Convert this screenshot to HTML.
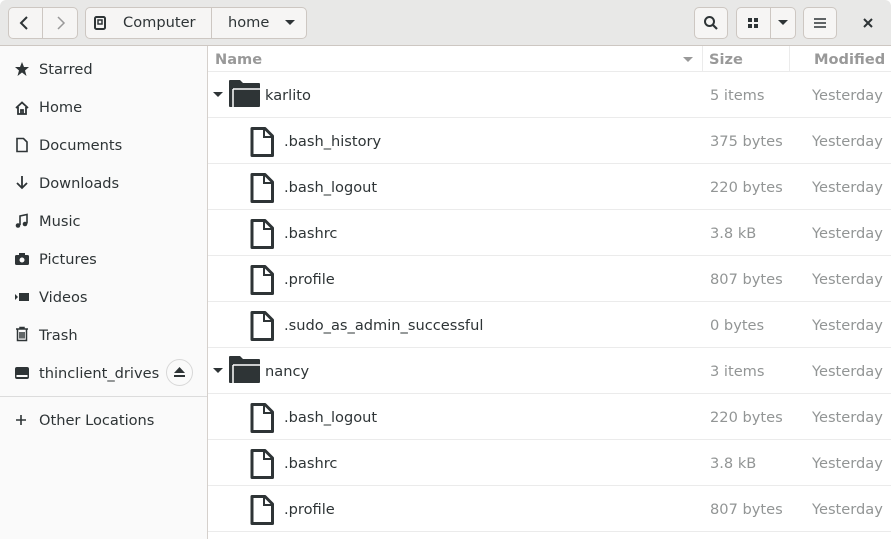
<!DOCTYPE html>
<html><head><meta charset="utf-8"><style>
*{margin:0;padding:0;box-sizing:border-box}
body{width:891px;height:539px;overflow:hidden;background:#fff;font-family:"DejaVu Sans","Liberation Sans",sans-serif;font-size:14.6px;color:#2e3436;position:relative}
.hb{position:absolute;left:0;top:0;width:891px;height:46px;background:#e8e8e7;border-bottom:1px solid #cdc7c2;border-radius:6px 6px 0 0}
.btn{position:absolute;top:7px;height:32px;background:#f6f5f4;border:1px solid #cdc7c2;border-radius:5px}
.side{position:absolute;left:0;top:46px;width:208px;height:493px;background:#fafafa;border-right:1px solid #d5d0cc}
.si{position:absolute;left:39px;height:20px;line-height:20px}
.ic{position:absolute;left:14px}
.a{position:absolute;white-space:nowrap}
.row{position:absolute;left:208px;width:683px;height:46px;border-bottom:1px solid #ebebeb}
.g{color:#929595}
</style></head><body>
<div class="hb"></div>
<div class="btn" style="left:8px;width:70px"></div>
<div style="position:absolute;left:42px;top:8px;width:1px;height:30px;background:#cdc7c2"></div>
<svg class="a" style="left:18px;top:15px" width="14" height="16"><path d="M9 2L3 8L9 14" stroke="#2e3436" stroke-width="2" fill="none"/></svg>
<svg class="a" style="left:54px;top:15px" width="14" height="16"><path d="M4 2L10 8L4 14" stroke="#999" stroke-width="1.5" fill="none"/></svg>
<div class="btn" style="left:85px;width:222px"></div>
<div style="position:absolute;left:211px;top:8px;width:1px;height:30px;background:#cdc7c2"></div>
<svg class="a" style="left:94px;top:16px" width="12" height="14"><rect x="1" y="1" width="10" height="12" rx="1.5" stroke="#2e3436" stroke-width="2" fill="none"/><rect x="4" y="4" width="4" height="4" stroke="#2e3436" stroke-width="1.5" fill="none"/></svg>
<div class="a" style="left:123px;top:14px;color:#2e3436">Computer</div>
<div class="a" style="left:228px;top:14px">home</div>
<svg class="a" style="left:285px;top:20px" width="10" height="6"><path d="M0 0H10L5 5Z" fill="#2e3436"/></svg>
<div class="btn" style="left:694px;width:34px"></div>
<svg class="a" style="left:703px;top:15px" width="16" height="16"><circle cx="6.5" cy="6.5" r="4.5" stroke="#2e3436" stroke-width="2" fill="none"/><path d="M10 10L14 14" stroke="#2e3436" stroke-width="2.2"/></svg>
<div class="btn" style="left:736px;width:60px"></div>
<div style="position:absolute;left:770px;top:8px;width:1px;height:30px;background:#cdc7c2"></div>
<svg class="a" style="left:748px;top:18px" width="10" height="10"><rect x="0" y="0" width="4" height="4" fill="#2e3436"/><rect x="6" y="0" width="4" height="4" fill="#2e3436"/><rect x="0" y="6" width="4" height="4" fill="#2e3436"/><rect x="6" y="6" width="4" height="4" fill="#2e3436"/></svg>
<svg class="a" style="left:778px;top:20px" width="10" height="6"><path d="M0 0H10L5 5Z" fill="#2e3436"/></svg>
<div class="btn" style="left:803px;width:34px"></div>
<svg class="a" style="left:814px;top:17px" width="12" height="12"><path d="M0 2H12M0 6H12M0 10H12" stroke="#2e3436" stroke-width="1.6"/></svg>
<svg class="a" style="left:863px;top:18px" width="10" height="10"><path d="M1 1L9 9M9 1L1 9" stroke="#2e3436" stroke-width="2"/></svg>

<div class="side"></div>
<svg class="ic" style="top:61px" width="16" height="16" viewBox="0 0 16 16"><path d="M8 1L10 6H15L11 9.5L12.5 15L8 11.5L3.5 15L5 9.5L1 6H6Z" fill="#2e3436"/></svg>
<div class="si" style="top:60px">Starred</div>
<svg class="ic" style="top:100px" width="16" height="16"><path d="M2 8L8 2.5L14 8M4 7V14H12V7M7 14V10H9V14" stroke="#2e3436" stroke-width="1.8" fill="none"/></svg>
<div class="si" style="top:98px">Home</div>
<svg class="ic" style="top:137px" width="16" height="16"><path d="M3 1.5H9.5L13 5V14.5H3Z" stroke="#2e3436" stroke-width="1.6" fill="none"/></svg>
<div class="si" style="top:136px">Documents</div>
<svg class="ic" style="top:175px" width="16" height="16"><path d="M8 1V13M3 8L8 13L13 8" stroke="#2e3436" stroke-width="1.8" fill="none"/></svg>
<div class="si" style="top:174px">Downloads</div>
<svg class="ic" style="top:213px" width="16" height="16"><path d="M6 12V3L13 1.5V10.5" stroke="#2e3436" stroke-width="1.6" fill="none"/><circle cx="4" cy="12.5" r="2.3" fill="#2e3436"/><circle cx="11" cy="11" r="2.3" fill="#2e3436"/></svg>
<div class="si" style="top:212px">Music</div>
<svg class="ic" style="top:251px" width="16" height="16"><rect x="1" y="4" width="14" height="10" rx="1.5" fill="#2e3436"/><rect x="5" y="2" width="6" height="3" fill="#2e3436"/><circle cx="8" cy="9" r="2.5" fill="#fafafa"/></svg>
<div class="si" style="top:250px">Pictures</div>
<svg class="ic" style="top:289px" width="16" height="16"><path d="M1 5L4 8L1 11Z" fill="#2e3436"/><rect x="5" y="4" width="10" height="8" fill="#2e3436"/></svg>
<div class="si" style="top:288px">Videos</div>
<svg class="ic" style="top:326px" width="16" height="16"><path d="M2 3H14M6 3V1.5H10V3M3.5 3.5V14.5H12.5V3.5M6 6V12.5M8 6V12.5M10 6V12.5" stroke="#2e3436" stroke-width="1.5" fill="none"/></svg>
<div class="si" style="top:326px">Trash</div>
<svg class="ic" style="top:365px" width="16" height="16"><rect x="1" y="2" width="14" height="12" rx="2" fill="#2e3436"/><rect x="2.5" y="10" width="11" height="2" fill="#fafafa"/></svg>
<div class="si" style="top:364px">thinclient_drives</div>
<div class="a" style="left:166px;top:359px;width:27px;height:27px;border:1px solid #d8d8d8;border-radius:50%"></div>
<svg class="a" style="left:173px;top:366px" width="13" height="12"><path d="M6.5 1L12 7H1Z" fill="#2e3436"/><rect x="1" y="9" width="11" height="2" fill="#2e3436"/></svg>
<div style="position:absolute;left:0;top:396px;width:207px;height:1px;background:#dcdcdc"></div>
<svg class="ic" style="top:413px" width="14" height="14"><path d="M7 2V12M2 7H12" stroke="#2e3436" stroke-width="1.6"/></svg>
<div class="si" style="top:411px">Other Locations</div>

<div style="position:absolute;left:208px;top:46px;width:683px;height:26px;border-bottom:1px solid #ebebeb"></div>
<div style="position:absolute;left:702px;top:46px;width:1px;height:26px;background:#ebebeb"></div>
<div style="position:absolute;left:789px;top:46px;width:1px;height:26px;background:#ebebeb"></div>
<div class="a" style="left:215px;top:51px;font-weight:bold;color:#999">Name</div>
<svg class="a" style="left:683px;top:57px" width="10" height="6"><path d="M0 0H10L5 5Z" fill="#999"/></svg>
<div class="a" style="left:709px;top:51px;font-weight:bold;color:#999">Size</div>
<div class="a" style="left:814px;top:51px;font-weight:bold;color:#999">Modified</div>

<div id="rows"></div>
<script>
var d=[["f","karlito","5 items"],["d",".bash_history","375 bytes"],["d",".bash_logout","220 bytes"],["d",".bashrc","3.8 kB"],["d",".profile","807 bytes"],["d",".sudo_as_admin_successful","0 bytes"],["f","nancy","3 items"],["d",".bash_logout","220 bytes"],["d",".bashrc","3.8 kB"],["d",".profile","807 bytes"]];
var h="";
d.forEach(function(r,i){var y=72+i*46;
h+='<div class="row" style="top:'+y+'px"></div>';
if(r[0]=="f"){
h+='<svg class="a" style="left:213px;top:'+(y+20)+'px" width="10" height="6"><path d="M0 0H10L5 5Z" fill="#2e3436"/></svg>';
h+='<svg class="a" style="left:228px;top:'+(y+8)+'px" width="33" height="28"><path d="M2 0H12L15 3H31Q32 3 32 4V26Q32 27 31 27H2Q1 27 1 26V1Q1 0 2 0Z" fill="#2e3436"/><path d="M5 9H32" stroke="#fff" stroke-width="1.5"/><path d="M5 9V27" stroke="#fff" stroke-width="1.5"/></svg>';
h+='<div class="a" style="left:265px;top:'+(y+15)+'px">'+r[1]+'</div>';
}else{
h+='<svg class="a" style="left:250px;top:'+(y+9)+'px" width="25" height="30"><path d="M2 1.5H15L22.5 9V28.5H2Z" stroke="#2e3436" stroke-width="3" fill="none" stroke-linejoin="round"/><path d="M14 1.5V10H22.5" stroke="#2e3436" stroke-width="2" fill="none"/></svg>';
h+='<div class="a" style="left:284px;top:'+(y+15)+'px">'+r[1]+'</div>';}
h+='<div class="a g" style="left:710px;top:'+(y+15)+'px">'+r[2]+'</div>';
h+='<div class="a g" style="left:812px;top:'+(y+15)+'px">Yesterday</div>';});
document.getElementById("rows").innerHTML=h;
</script>
</body></html>
